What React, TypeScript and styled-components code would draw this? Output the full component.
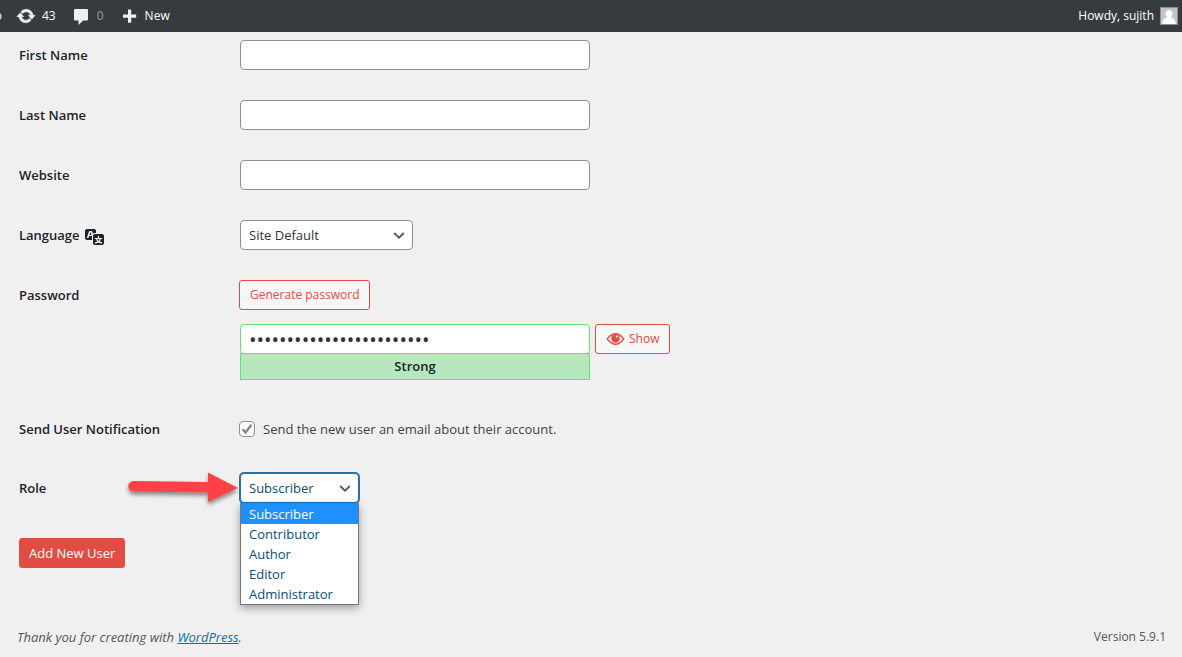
import React, { useState } from "react";
import styled, { createGlobalStyle, css } from "styled-components";

const GlobalStyle = createGlobalStyle`
  *, *::before, *::after { box-sizing: border-box; }
  body {
    margin: 0;
    background: #f0f0f1;
    color: #3c434a;
    font-family: "Open Sans", "Noto Sans", sans-serif;
    font-size: 13px;
    line-height: 20px;
  }
  button, input, select { font: inherit; margin: 0; }
`;

const AdminBar = styled.header`
  display: flex;
  align-items: center;
  height: 32px;
  padding-right: 4px;
  background: #363b3f;
  color: #f0f0f1;
  font-size: 12px;
`;

const BarLink = styled.a<{ $dim?: boolean }>`
  display: flex;
  align-items: center;
  gap: 6px;
  margin-right: 15px;
  color: ${(p) => (p.$dim ? "#9a9d9f" : "#fff")};
  text-decoration: none;
  svg { fill: #f0f0f1; }
`;

const SiteLink = styled(BarLink)`
  justify-content: flex-end;
  width: 2px;
  margin-right: 14px;
  overflow: hidden;
`;

const AccountLink = styled(BarLink)`
  margin: 0 0 0 auto;
`;

const Main = styled.main`
  padding: 8px 19px 0;
`;

const FormRow = styled.div<{ $gap?: number }>`
  display: grid;
  grid-template-columns: 220px 1fr;
  margin-bottom: ${(p) => p.$gap ?? 30}px;
`;

const labelText = css`
  display: flex;
  align-items: center;
  gap: 5px;
  color: #1d2327;
  font-weight: 600;
`;

const Label = styled.label`
  ${labelText}
  height: 30px;
`;

const ShortLabel = styled.span`
  ${labelText}
  height: 20px;
`;

const RoleLabelCell = styled.div`
  position: relative;
`;

const Arrow = styled.svg`
  position: absolute;
  top: -4px;
  right: 0;
`;

const Field = styled.div`
  display: flex;
  align-items: flex-start;
`;

const fieldBox = css`
  height: 30px;
  border: 1px solid #8c8f94;
  border-radius: 4px;
  background: #fff;
  color: #2c3338;
  outline: none;
`;

const TextInput = styled.input`
  ${fieldBox}
  width: 350px;
  margin-left: 1px;
  padding: 0 8px;
`;

const PasswordInput = styled.input`
  ${fieldBox}
  display: block;
  width: 100%;
  padding: 0 8px;
  border-color: #68de7c;
  font-size: 20px;
`;

const SelectWrap = styled.div<{ $width: number }>`
  position: relative;
  width: ${(p) => p.$width}px;
  margin-left: 1px;
`;

const Select = styled.select<{ $open?: boolean }>`
  ${fieldBox}
  display: block;
  width: 100%;
  padding: 0 24px 0 8px;
  appearance: none;
  ${(p) =>
    p.$open &&
    css`
      border-color: #2271b1;
      box-shadow: 0 0 0 1px #2271b1;
      color: #0a4b78;
    `}
`;

const Chevron = styled.svg`
  position: absolute;
  top: 7px;
  right: 6px;
  pointer-events: none;
`;

const OptionList = styled.ul`
  position: absolute;
  top: 30px;
  left: 0;
  right: 0;
  margin: 0;
  padding: 0;
  border: 1px solid #767676;
  background: #fff;
  box-shadow: 0 3px 8px rgba(0, 0, 0, 0.35);
  list-style: none;
`;

const Option = styled.li<{ $active: boolean }>`
  height: 20px;
  padding-left: 8px;
  background: ${(p) => (p.$active ? "#1e90ff" : "#fff")};
  color: ${(p) => (p.$active ? "#fff" : "#0a4b78")};
`;

const Button = styled.button`
  display: flex;
  align-items: center;
  gap: 4px;
  height: 30px;
  padding: 0 10px;
  border: 1px solid #e14d43;
  border-radius: 3px;
  background: #f6f7f7;
  color: #e14d43;
  font-size: 12px;
  white-space: nowrap;
`;

const PrimaryButton = styled(Button)`
  padding: 0 9px;
  background: #e14d43;
  color: #fff;
  font-size: 13px;
`;

const PasswordLine = styled.div`
  display: flex;
  align-items: flex-start;
  gap: 5px;
  margin: 14px 0 0 1px;
`;

const PasswordBox = styled.div`
  width: 350px;
`;

const Strength = styled.div`
  height: 27px;
  margin-top: -1px;
  border: 1px solid #68de7c;
  background: #b8e6bf;
  color: #1d2327;
  font-weight: 600;
  line-height: 25px;
  text-align: center;
`;

const CheckLabel = styled.label`
  display: flex;
  align-items: center;
  gap: 8px;
`;

const CheckBoxWrap = styled.span`
  position: relative;
  width: 16px;
  height: 16px;
  svg { position: absolute; inset: 0; pointer-events: none; }
`;

const CheckBox = styled.input`
  display: block;
  width: 16px;
  height: 16px;
  border: 1px solid #8c8f94;
  border-radius: 4px;
  background: #fff;
  appearance: none;
`;

const Footer = styled.footer`
  display: flex;
  justify-content: space-between;
  margin-top: 59px;
  padding: 0 16px 20px 17px;
  color: #50575e;
  a { color: #0073aa; }
`;

const Version = styled.span`
  font-size: 12px;
`;

const ChevronIcon = () => (
  <Chevron width="16" height="16" viewBox="0 0 16 16" fill="none" stroke="#50575e" strokeWidth="1.800">
    <path d="M3.200 6 8 10.700 12.800 6" />
  </Chevron>
);

const textFields = [
  { id: "first_name", label: "First Name" },
  { id: "last_name", label: "Last Name" },
  { id: "url", label: "Website" },
];

const roles = ["Subscriber", "Contributor", "Author", "Editor", "Administrator"];

export default function App() {
  const [role, setRole] = useState("Subscriber");
  const [notify, setNotify] = useState(true);

  return (
    <>
      <GlobalStyle />
      <AdminBar>
        <SiteLink href="#site">o</SiteLink>
        <BarLink href="#updates">
          <UpdateIcon />
          43
        </BarLink>
        <BarLink href="#comments" $dim>
          <CommentIcon />
          0
        </BarLink>
        <BarLink href="#new">
          <PlusIcon />
          New
        </BarLink>
        <AccountLink href="#profile">
          Howdy, sujith
          <Avatar />
        </AccountLink>
      </AdminBar>

      <Main>
        <form onSubmit={(e) => e.preventDefault()}>
          {textFields.map((f) => (
            <FormRow key={f.id}>
              <Label htmlFor={f.id}>{f.label}</Label>
              <Field>
                <TextInput id={f.id} type="text" />
              </Field>
            </FormRow>
          ))}

          <FormRow>
            <Label htmlFor="locale">
              Language
              <TranslationIcon />
            </Label>
            <SelectWrap $width={173}>
              <Select id="locale">
                <option>Site Default</option>
              </Select>
              <ChevronIcon />
            </SelectWrap>
          </FormRow>

          <FormRow $gap={39}>
            <Label htmlFor="pass1">Password</Label>
            <div>
              <Button type="button">Generate password</Button>
              <PasswordLine>
                <PasswordBox>
                  <PasswordInput id="pass1" type="password" defaultValue="abcdefghijklmnopqrstuvwx" />
                  <Strength>Strong</Strength>
                </PasswordBox>
                <Button type="button">
                  <EyeIcon />
                  Show
                </Button>
              </PasswordLine>
            </div>
          </FormRow>

          <FormRow $gap={34}>
            <ShortLabel>Send User Notification</ShortLabel>
            <CheckLabel>
              <CheckBoxWrap>
                <CheckBox type="checkbox" checked={notify} onChange={(e) => setNotify(e.target.checked)} />
                {notify && (
                  <svg width="16" height="16" viewBox="0 0 16 16" fill="none" stroke="#7e8993" strokeWidth="2.4">
                    <path d="M3.6 8.2 6.6 11.4 12.4 3.8" />
                  </svg>
                )}
              </CheckBoxWrap>
              Send the new user an email about their account.
            </CheckLabel>
          </FormRow>

          <FormRow $gap={35}>
            <RoleLabelCell>
              <Label htmlFor="role">Role</Label>
              <Arrow width="120" height="44" viewBox="0 0 120 44" aria-hidden="true">
                <defs>
                  <filter id="arrowShadow" x="-10%" y="-20%" width="120%" height="160%">
                    <feDropShadow dx="0" dy="3" stdDeviation="2" floodColor="#000" floodOpacity="0.45" />
                  </filter>
                </defs>
                <path
                  d="M14.500 12 L89 13 V3.500 L119 19 L89 33 V23.500 L14.500 22.500 A5.200 5.200 0 0 1 14.500 12 Z"
                  fill="#fd4245"
                  filter="url(#arrowShadow)"
                />
              </Arrow>
            </RoleLabelCell>
            <SelectWrap $width={119}>
              <Select id="role" $open value={role} onChange={(e) => setRole(e.target.value)}>
                {roles.map((r) => (
                  <option key={r}>{r}</option>
                ))}
              </Select>
              <ChevronIcon />
              <OptionList role="listbox" aria-label="Role">
                {roles.map((r) => (
                  <Option key={r} role="option" aria-selected={r === role} $active={r === role} onClick={() => setRole(r)}>
                    {r}
                  </Option>
                ))}
              </OptionList>
            </SelectWrap>
          </FormRow>

          <PrimaryButton type="submit">Add New User</PrimaryButton>
        </form>
      </Main>

      <Footer>
        <em>
          Thank you for creating with <a href="#wordpress">WordPress</a>.
        </em>
        <Version>Version 5.9.1</Version>
      </Footer>
    </>
  );
}

function UpdateIcon() {
  return (
    <svg width="20" height="20" viewBox="0 0 20 20" stroke="#f0f0f1" strokeWidth="0.5">
      <path d="M10.2 3.28c3.53 0 6.43 2.61 6.92 6h2.08l-3.5 4-3.5-4h2.32c-.45-1.97-2.21-3.45-4.32-3.45-1.45 0-2.73.71-3.54 1.78L4.95 5.66C6.23 4.2 8.11 3.28 10.2 3.28zm-.4 13.44c-3.52 0-6.43-2.61-6.92-6H.8l3.5-4c1.17 1.33 2.33 2.67 3.5 4H5.48c.45 1.97 2.21 3.45 4.32 3.45 1.45 0 2.73-.71 3.54-1.78l1.71 1.95c-1.28 1.46-3.15 2.38-5.25 2.38z" />
    </svg>
  );
}

function CommentIcon() {
  return (
    <svg width="20" height="20" viewBox="0 0 20 20">
      <path d="M4.300 3h11.400q1.300 0 1.300 1.300v9q0 1.300-1.300 1.300H12.300L7.500 19v-4.400H4.300Q3 14.600 3 13.300v-9Q3 3 4.300 3z" />
    </svg>
  );
}

function PlusIcon() {
  return (
    <svg width="20" height="20" viewBox="0 0 20 20">
      <path d="M9 3.500h3.200v5h5v3.200h-5v5H9v-5H4V8.500h5z" />
    </svg>
  );
}

function Avatar() {
  return (
    <svg width="18" height="18" viewBox="0 0 18 18">
      <rect width="18" height="18" fill="#8c8f94" />
      <rect x="1" y="1" width="16" height="16" fill="#c5c5c5" />
      <path d="M9 3a3.500 3.800 0 0 1 2 6.900c.3 1 4.500 1 4.800 7.100H2.200c.3-6.100 4.500-6.100 4.800-7.100A3.500 3.800 0 0 1 9 3z" fill="#fff" />
    </svg>
  );
}

function TranslationIcon() {
  return (
    <svg width="20" height="22" viewBox="0 -2 20 22" fill="#1d2327">
      <path d="M11 7H9.49c-.63 0-1.25.3-1.59.7L7 5H4.13l-2.39 7h1.69l.74-2H7v4H2c-1.1 0-2-.9-2-2V5c0-1.1.9-2 2-2h7c1.1 0 2 .9 2 2v2zM6.51 9H4.49l1-2.93zM10 8h7c1.1 0 2 .9 2 2v7c0 1.1-.9 2-2 2h-7c-1.1 0-2-.9-2-2v-7c0-1.1.9-2 2-2zm7.250 5v-1.080h-3.170V9.750h-1.160v2.170H9.750V13h1.280c.11.850.56 1.850 1.280 2.620-.87.360-1.890.620-2.310.620-.01.020.22.970.2 1.460.84 0 2.210-.5 3.280-1.150 1.090.650 2.480 1.150 3.340 1.150-.02-.49.2-1.440.2-1.460-.43 0-1.490-.27-2.380-.63.7-.77 1.140-1.770 1.250-2.610h1.360zm-3.810 1.930c-.5-.46-.85-1.130-1.010-1.930h2.090c-.17.8-.51 1.470-1 1.930l-.04.030s-.03-.02-.04-.03z" />
    </svg>
  );
}

function EyeIcon() {
  return (
    <svg width="19" height="20" viewBox="0 0 19 20" fill="none">
      <path d="M1.200 10Q9.500-.5 17.800 10Q9.500 20.500 1.200 10Z" stroke="#e14d43" strokeWidth="1.300" />
      <circle cx="9.500" cy="9.500" r="4.200" fill="#e14d43" />
      <circle cx="10.800" cy="7.600" r="1.100" fill="#f6f7f7" />
    </svg>
  );
}
